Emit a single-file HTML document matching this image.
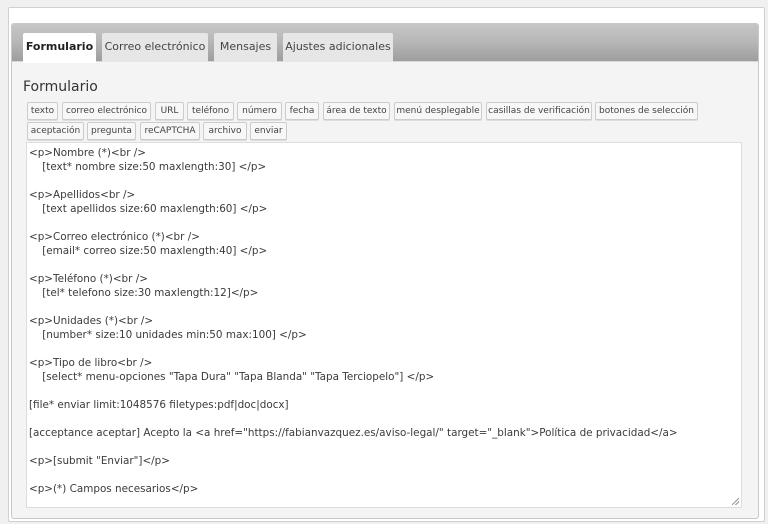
<!DOCTYPE html>
<html><head><meta charset="utf-8"><style>
*{box-sizing:border-box;margin:0;padding:0}
body{width:768px;height:524px;background:#f0f0f0;position:relative;overflow:hidden;font-family:"DejaVu Sans","Liberation Sans",sans-serif;color:#333}
.outer{position:absolute;left:8px;top:7px;width:757px;height:515px;background:#fff;border:1px solid #d0d0d0;border-radius:2px}
.panel{position:absolute;left:11px;top:23px;width:748px;height:496px;background:#f4f4f4;border:1px solid #c8c8c8;border-radius:3px;overflow:hidden}
.bar{position:absolute;left:0;top:0;width:100%;height:38px;background:linear-gradient(#c6c6c6,#b8b8b8 45%,#9e9e9e);border-bottom:1px solid #d8d8d8}
.tab{position:absolute;top:9px;height:29px;background:#e6e6e6;font-size:11px;line-height:27px;text-align:center;color:#444;border-radius:2px 2px 0 0}
.tab.a{background:#fff;font-weight:bold;color:#222;height:30px}
h2{position:absolute;left:11px;top:55px;font-size:14px;font-weight:normal;color:#333}
.b{position:absolute;height:18px;background:#f7f7f7;border:1px solid #ccc;border-radius:2px;font-size:9px;line-height:16px;text-align:center;color:#444;box-shadow:0 1px 0 #ddd}
.ta{position:absolute;left:14px;top:118px;width:716px;height:366px;background:#fff;border:1px solid #ddd}
pre{position:absolute;left:2px;top:3px;font-family:"DejaVu Sans",sans-serif;font-size:10.4px;line-height:14px;color:#3a3a3a;white-space:pre}
.grip{position:absolute;right:2px;bottom:2px;width:7px;height:7px;background:linear-gradient(135deg,transparent 45%,#999 46%,#999 54%,transparent 55%,transparent 70%,#999 71%,#999 79%,transparent 80%)}
</style></head><body>
<div class="outer"></div>
<div class="panel">
<div class="bar"></div>
<div class="tab a" style="left:11px;width:73px">Formulario</div>
<div class="tab" style="left:90px;width:106px">Correo electrónico</div>
<div class="tab" style="left:202px;width:63px">Mensajes</div>
<div class="tab" style="left:271px;width:110px">Ajustes adicionales</div>
<h2>Formulario</h2>
<div class="b" style="left:15px;top:78px;width:31px">texto</div>
<div class="b" style="left:50px;top:78px;width:89px">correo electrónico</div>
<div class="b" style="left:143px;top:78px;width:29px">URL</div>
<div class="b" style="left:175px;top:78px;width:47px">teléfono</div>
<div class="b" style="left:225px;top:78px;width:45px">número</div>
<div class="b" style="left:273px;top:78px;width:34px">fecha</div>
<div class="b" style="left:311px;top:78px;width:67px">área de texto</div>
<div class="b" style="left:382px;top:78px;width:88px">menú desplegable</div>
<div class="b" style="left:474px;top:78px;width:106px">casillas de verificación</div>
<div class="b" style="left:583px;top:78px;width:103px">botones de selección</div>
<div class="b" style="left:15px;top:98px;width:57px">aceptación</div>
<div class="b" style="left:75px;top:98px;width:49px">pregunta</div>
<div class="b" style="left:128px;top:98px;width:60px">reCAPTCHA</div>
<div class="b" style="left:191px;top:98px;width:44px">archivo</div>
<div class="b" style="left:238px;top:98px;width:37px">enviar</div>
<div class="ta"><pre>&lt;p&gt;Nombre (*)&lt;br /&gt;
    [text* nombre size:50 maxlength:30] &lt;/p&gt;

&lt;p&gt;Apellidos&lt;br /&gt;
    [text apellidos size:60 maxlength:60] &lt;/p&gt;

&lt;p&gt;Correo electrónico (*)&lt;br /&gt;
    [email* correo size:50 maxlength:40] &lt;/p&gt;

&lt;p&gt;Teléfono (*)&lt;br /&gt;
    [tel* telefono size:30 maxlength:12]&lt;/p&gt;

&lt;p&gt;Unidades (*)&lt;br /&gt;
    [number* size:10 unidades min:50 max:100] &lt;/p&gt;

&lt;p&gt;Tipo de libro&lt;br /&gt;
    [select* menu-opciones "Tapa Dura" "Tapa Blanda" "Tapa Terciopelo"] &lt;/p&gt;

[file* enviar limit:1048576 filetypes:pdf|doc|docx]

[acceptance aceptar] Acepto la &lt;a href="https://fabianvazquez.es/aviso-legal/" target="_blank"&gt;Política de privacidad&lt;/a&gt;

&lt;p&gt;[submit "Enviar"]&lt;/p&gt;

&lt;p&gt;(*) Campos necesarios&lt;/p&gt;</pre><div class="grip"></div></div>
</div>
</body></html>
